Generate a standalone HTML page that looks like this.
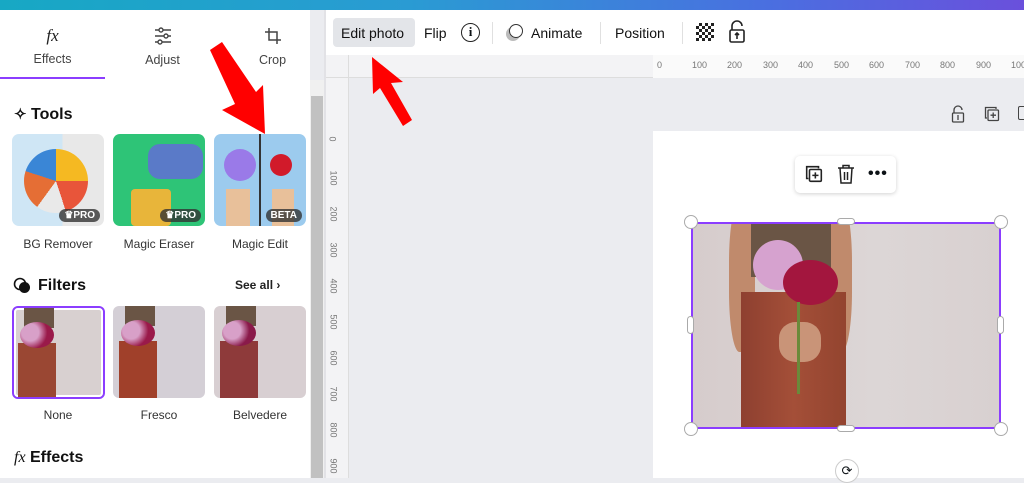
<!DOCTYPE html>
<html><head><meta charset="utf-8"><style>
*{box-sizing:border-box;margin:0;padding:0}
body{width:1024px;height:478px;overflow:hidden;position:relative;background:#ebecf0;font-family:"Liberation Sans",sans-serif;color:#0d1216}
.abs{position:absolute}
.topbar{left:0;top:0;width:1024px;height:10px;background:linear-gradient(90deg,#17a8c4,#2a9bd3 40%,#4a6fe0 75%,#6a50dc)}
.panel{left:0;top:10px;width:310px;height:468px;background:#fff}
.tab{position:absolute;top:0;width:105px;text-align:center;font-size:12.5px;color:#444}
.h{position:absolute;font-size:16px;font-weight:bold;color:#111}
.card{position:absolute;width:92px;height:92px;border-radius:7px;overflow:hidden}
.lbl{position:absolute;width:100px;text-align:center;font-size:12px;color:#333}
.badge{position:absolute;right:4px;bottom:4px;background:rgba(50,50,50,.8);color:#fff;font-size:10px;font-weight:bold;border-radius:8px;padding:1px 5px}
.photo{position:absolute;background:#d8d0d0;overflow:hidden}
.photo .sk{position:absolute;background:#9a4733}
.photo .tp{position:absolute;background:#6a5545}
.photo .arm{position:absolute;background:#c48a6a;border-radius:40%}
.photo .fl{position:absolute;border-radius:50%}
.tb{position:absolute;top:10px;left:326px;width:698px;height:45px;background:#fff}
.tbt{position:absolute;top:15px;font-size:14px;color:#111}
.ruler{background:#f3f3f5}
.rn{position:absolute;font-size:9px;color:#777}
</style></head><body>
<div class="abs topbar"></div>
<div class="abs panel">
  <div class="tab" style="left:0;top:16px"><div style="font-family:'Liberation Serif',serif;font-style:italic;font-size:17px;color:#222">fx</div><div style="margin-top:6px">Effects</div></div>
  <div class="abs" style="left:0;top:67px;width:105px;height:2px;background:#8b3dff"></div>
  <div class="tab" style="left:110px;top:16px"><svg width="20" height="20" viewBox="0 0 20 20" fill="none" stroke="#444" stroke-width="1.4"><path d="M2 4h16M2 10h16M2 16h16"/><circle cx="8" cy="4" r="2" fill="#fff"/><circle cx="13" cy="10" r="2" fill="#fff"/><circle cx="7" cy="16" r="2" fill="#fff"/></svg><div style="margin-top:4px">Adjust</div></div>
  <div class="tab" style="left:220px;top:16px"><svg width="20" height="20" viewBox="0 0 20 20" fill="none" stroke="#444" stroke-width="1.5"><path d="M6 2v12h12M2 6h12v12"/></svg><div style="margin-top:4px">Crop</div></div>
  <div class="h" style="left:14px;top:95px"><span style="font-size:15px">✧</span> Tools</div>
  <div class="card" style="left:12px;top:124px;background:linear-gradient(90deg,#cfe6f5 55%,#e8e8e8 55%)"><div class="abs" style="left:12px;top:15px;width:64px;height:64px;border-radius:50%;background:conic-gradient(#f5b922 0 25%,#e8553a 0 45%,#e9e9e9 0 60%,#e56e35 0 80%,#3a86d6 0)"></div><div class="badge">♛PRO</div></div>
  <div class="lbl" style="left:8px;top:227px">BG Remover</div>
  <div class="card" style="left:113px;top:124px;background:#2ec477"><div class="abs" style="left:35px;top:10px;width:55px;height:35px;border-radius:12px;background:#5a7ac8"></div><div class="abs" style="left:18px;top:55px;width:40px;height:37px;background:#e8b53a;border-radius:4px"></div><div class="badge">♛PRO</div></div>
  <div class="lbl" style="left:109px;top:227px">Magic Eraser</div>
  <div class="card" style="left:214px;top:124px;background:#9ccbee"><div class="abs" style="left:10px;top:15px;width:32px;height:32px;border-radius:50%;background:#9a7ae8"></div><div class="abs" style="left:56px;top:20px;width:22px;height:22px;border-radius:50%;background:#d11a2a"></div><div class="abs" style="left:12px;top:55px;width:24px;height:37px;background:#e8c09a"></div><div class="abs" style="left:58px;top:55px;width:22px;height:37px;background:#e8c09a"></div><div class="abs" style="left:45px;top:0;width:2px;height:92px;background:#333"></div><div class="badge">BETA</div></div>
  <div class="lbl" style="left:210px;top:227px">Magic Edit</div>
  <svg class="abs" style="left:13px;top:266px" width="19" height="19" viewBox="0 0 19 19"><circle cx="7" cy="8" r="5.5" fill="none" stroke="#111" stroke-width="1.6"/><circle cx="11.5" cy="11.5" r="5.5" fill="#111"/></svg>
  <div class="h" style="left:38px;top:267px">Filters</div>
  <div class="abs" style="left:235px;top:268px;font-size:12px;font-weight:bold;color:#222">See all ›</div>
  <div class="lbl" style="left:8px;top:398px">None</div>
  <div class="lbl" style="left:109px;top:398px">Fresco</div>
  <div class="lbl" style="left:210px;top:398px">Belvedere</div>
  <div class="h" style="left:14px;top:439px"><span style="font-family:'Liberation Serif',serif;font-style:italic;font-weight:normal">fx</span> Effects</div>
</div>
<!-- filter thumbnails -->
<div class="photo" style="left:12px;top:306px;width:93px;height:93px;border:2px solid #8b3dff;border-radius:6px;outline:2px solid #fff;outline-offset:-4px">
  <div class="tp" style="left:10px;top:0;width:30px;height:20px"></div><div class="sk" style="left:4px;top:35px;width:38px;height:58px"></div><div class="fl" style="left:6px;top:14px;width:34px;height:26px;background:radial-gradient(circle at 30% 40%,#d8a0c8 30%,#9a1a4a 60%)"></div></div>
<div class="photo" style="left:113px;top:306px;width:92px;height:92px;border-radius:6px;background:#d4cfd6">
  <div class="tp" style="left:12px;top:0;width:30px;height:20px"></div><div class="sk" style="left:6px;top:35px;width:38px;height:57px;background:#a0402a"></div><div class="fl" style="left:8px;top:14px;width:34px;height:26px;background:radial-gradient(circle at 30% 40%,#d8a0c8 30%,#9a1a4a 60%)"></div></div>
<div class="photo" style="left:214px;top:306px;width:92px;height:92px;border-radius:6px;background:#d8cfd2">
  <div class="tp" style="left:12px;top:0;width:30px;height:20px"></div><div class="sk" style="left:6px;top:35px;width:38px;height:57px;background:#8e3a3a"></div><div class="fl" style="left:8px;top:14px;width:34px;height:26px;background:radial-gradient(circle at 30% 40%,#d8a0c8 30%,#8a1a4a 60%)"></div></div>
<!-- scrollbar -->
<div class="abs" style="left:310px;top:80px;width:14px;height:398px;background:#f0f0f0"></div>
<div class="abs" style="left:311px;top:96px;width:12px;height:382px;background:#c1c1c1"></div>
<div class="abs" style="left:324px;top:10px;width:2px;height:468px;background:#e2e2e6"></div>
<!-- toolbar -->
<div class="tb">
  <div class="abs" style="left:7px;top:8px;width:82px;height:29px;background:#e3e5e9;border-radius:4px"></div>
  <div class="tbt" style="left:15px">Edit photo</div>
  <div class="tbt" style="left:98px">Flip</div>
  <div class="abs" style="left:135px;top:13px;width:19px;height:19px;border:1.6px solid #222;border-radius:50%;text-align:center;font-size:13px;font-weight:bold;line-height:16px;font-family:'Liberation Serif',serif">i</div>
  <div class="abs" style="left:166px;top:12px;width:1px;height:22px;background:#e0e0e0"></div>
  <div class="abs" style="left:183px;top:14px;width:14px;height:14px;border:1.6px solid #333;border-radius:50%;box-shadow:-3px 3px 0 #bbb"></div>
  <div class="tbt" style="left:205px">Animate</div>
  <div class="abs" style="left:274px;top:12px;width:1px;height:22px;background:#e0e0e0"></div>
  <div class="tbt" style="left:289px">Position</div>
  <div class="abs" style="left:356px;top:12px;width:1px;height:22px;background:#e0e0e0"></div>
  <div class="abs" style="left:370px;top:13px;width:18px;height:18px;background:repeating-conic-gradient(#222 0 25%,#fff 0 50%) 0 0/6px 6px"></div>
  <svg class="abs" style="left:402px;top:10px" width="18" height="24" viewBox="0 0 18 24" fill="none" stroke="#222" stroke-width="1.6"><path d="M4 10V6a5 5 0 0 1 10 0"/><rect x="2" y="10" width="14" height="12" rx="1.5"/><path d="M9 13v6M7 15l2-2 2 2"/></svg>
</div>
<!-- rulers -->
<div class="abs ruler" style="left:326px;top:55px;width:698px;height:23px;border-bottom:1px solid #ddd"></div>
<div class="abs" style="left:653px;top:55px;width:371px;height:23px;background:#fafafa"></div>
<div class="abs ruler" style="left:326px;top:78px;width:23px;height:400px;border-right:1px solid #ddd"></div>
<div class="abs" style="left:348px;top:55px;width:1px;height:23px;background:#ddd"></div>
<div class="rn" style="left:657px;top:60px">0</div><div class="rn" style="left:692px;top:60px">100</div><div class="rn" style="left:727px;top:60px">200</div><div class="rn" style="left:763px;top:60px">300</div><div class="rn" style="left:798px;top:60px">400</div><div class="rn" style="left:834px;top:60px">500</div><div class="rn" style="left:869px;top:60px">600</div><div class="rn" style="left:905px;top:60px">700</div><div class="rn" style="left:940px;top:60px">800</div><div class="rn" style="left:976px;top:60px">900</div><div class="rn" style="left:1011px;top:60px">1000</div>
<div class="abs" style="left:326px;top:131px;width:22px;height:347px;font-size:9px;color:#777">
 <div class="abs" style="left:4px;top:3px;transform:rotate(90deg)">0</div>
 <div class="abs" style="left:0;top:42px;transform:rotate(90deg)">100</div><div class="abs" style="left:0;top:78px;transform:rotate(90deg)">200</div><div class="abs" style="left:0;top:114px;transform:rotate(90deg)">300</div><div class="abs" style="left:0;top:150px;transform:rotate(90deg)">400</div><div class="abs" style="left:0;top:186px;transform:rotate(90deg)">500</div><div class="abs" style="left:0;top:222px;transform:rotate(90deg)">600</div><div class="abs" style="left:0;top:258px;transform:rotate(90deg)">700</div><div class="abs" style="left:0;top:294px;transform:rotate(90deg)">800</div><div class="abs" style="left:0;top:330px;transform:rotate(90deg)">900</div>
</div>
<!-- page icons -->
<svg class="abs" style="left:951px;top:105px" width="14" height="18" viewBox="0 0 14 18" fill="none" stroke="#444" stroke-width="1.3"><path d="M3 8V5a4 4 0 0 1 8 0"/><rect x="1.5" y="8" width="11" height="9" rx="1"/><path d="M7 10v5"/></svg>
<svg class="abs" style="left:984px;top:106px" width="16" height="16" viewBox="0 0 16 16" fill="none" stroke="#444" stroke-width="1.3"><path d="M3 12H1.5V1.5H12V3"/><rect x="4" y="4" width="10.5" height="10.5" rx="1"/><path d="M9.2 6.5v5.5M6.5 9.2h5.5"/></svg>
<div class="abs" style="left:1018px;top:106px;width:8px;height:14px;border:1.3px solid #444;border-radius:2px"></div>
<!-- page -->
<div class="abs" style="left:653px;top:131px;width:371px;height:347px;background:#fff"></div>
<div class="abs" style="left:795px;top:156px;width:101px;height:37px;background:#fff;border-radius:5px;box-shadow:0 1px 4px rgba(0,0,0,.18)"></div>
<svg class="abs" style="left:805px;top:165px" width="18" height="18" viewBox="0 0 16 16" fill="none" stroke="#222" stroke-width="1.4"><path d="M3 12H1.5V1.5H12V3"/><rect x="4" y="4" width="10.5" height="10.5" rx="1"/><path d="M9.2 6.5v5.5M6.5 9.2h5.5"/></svg>
<svg class="abs" style="left:837px;top:164px" width="18" height="20" viewBox="0 0 18 20" fill="none" stroke="#222" stroke-width="1.5"><path d="M1 4h16M6 4V1.5h6V4M3 4l1 15h10l1-15M7.5 8v8M10.5 8v8"/></svg>
<div class="abs" style="left:868px;top:165px;font-size:16px;font-weight:bold;letter-spacing:1px">•••</div>
<!-- main photo -->
<div class="photo" style="left:691px;top:222px;width:310px;height:206px;background:linear-gradient(90deg,#d6cccc,#dcd6d6 60%,#d8d0d0)">
  <div class="arm" style="left:38px;top:-20px;width:26px;height:150px;background:#c08a6c"></div>
  <div class="arm" style="left:135px;top:-20px;width:26px;height:150px;background:#c08a6c"></div>
  <div class="tp" style="left:60px;top:0;width:80px;height:55px"></div>
  <div class="sk" style="left:50px;top:70px;width:105px;height:136px;background:linear-gradient(90deg,#8e4030,#a44f38 50%,#93442f)"></div>
  <div class="arm" style="left:88px;top:100px;width:42px;height:40px;background:#c99478"></div>
  <div class="fl" style="left:62px;top:18px;width:50px;height:50px;background:#d6a2cf"></div>
  <div class="fl" style="left:92px;top:38px;width:55px;height:45px;background:#a3163e"></div>
  <div class="abs" style="left:106px;top:80px;width:3px;height:92px;background:#6a8a3a"></div>
</div>
<div class="abs" style="left:691px;top:222px;width:310px;height:207px;border:2px solid #8b3dff"></div>
<div class="abs" style="left:684px;top:215px;width:14px;height:14px;border-radius:50%;background:#fff;border:1px solid #aaa"></div>
<div class="abs" style="left:994px;top:215px;width:14px;height:14px;border-radius:50%;background:#fff;border:1px solid #aaa"></div>
<div class="abs" style="left:684px;top:422px;width:14px;height:14px;border-radius:50%;background:#fff;border:1px solid #aaa"></div>
<div class="abs" style="left:994px;top:422px;width:14px;height:14px;border-radius:50%;background:#fff;border:1px solid #aaa"></div>
<div class="abs" style="left:837px;top:218px;width:18px;height:7px;border-radius:4px;background:#fff;border:1px solid #aaa"></div>
<div class="abs" style="left:837px;top:425px;width:18px;height:7px;border-radius:4px;background:#fff;border:1px solid #aaa"></div>
<div class="abs" style="left:687px;top:316px;width:7px;height:18px;border-radius:4px;background:#fff;border:1px solid #aaa"></div>
<div class="abs" style="left:997px;top:316px;width:7px;height:18px;border-radius:4px;background:#fff;border:1px solid #aaa"></div>
<div class="abs" style="left:835px;top:459px;width:24px;height:24px;border-radius:50%;background:#fff;border:1px solid #ccc;text-align:center;font-size:13px;line-height:22px">⟳</div>
<!-- red arrows -->
<svg class="abs" style="left:0;top:0" width="1024" height="478"><polygon fill="#ff0000" points="210,50 222,42 256,92 263,85 265,134 222,110 235,104" /><polygon fill="#ff0000" points="372,57 403,82 391,83 412,120 403,126 380,88 373,94"/></svg>
</body></html>
